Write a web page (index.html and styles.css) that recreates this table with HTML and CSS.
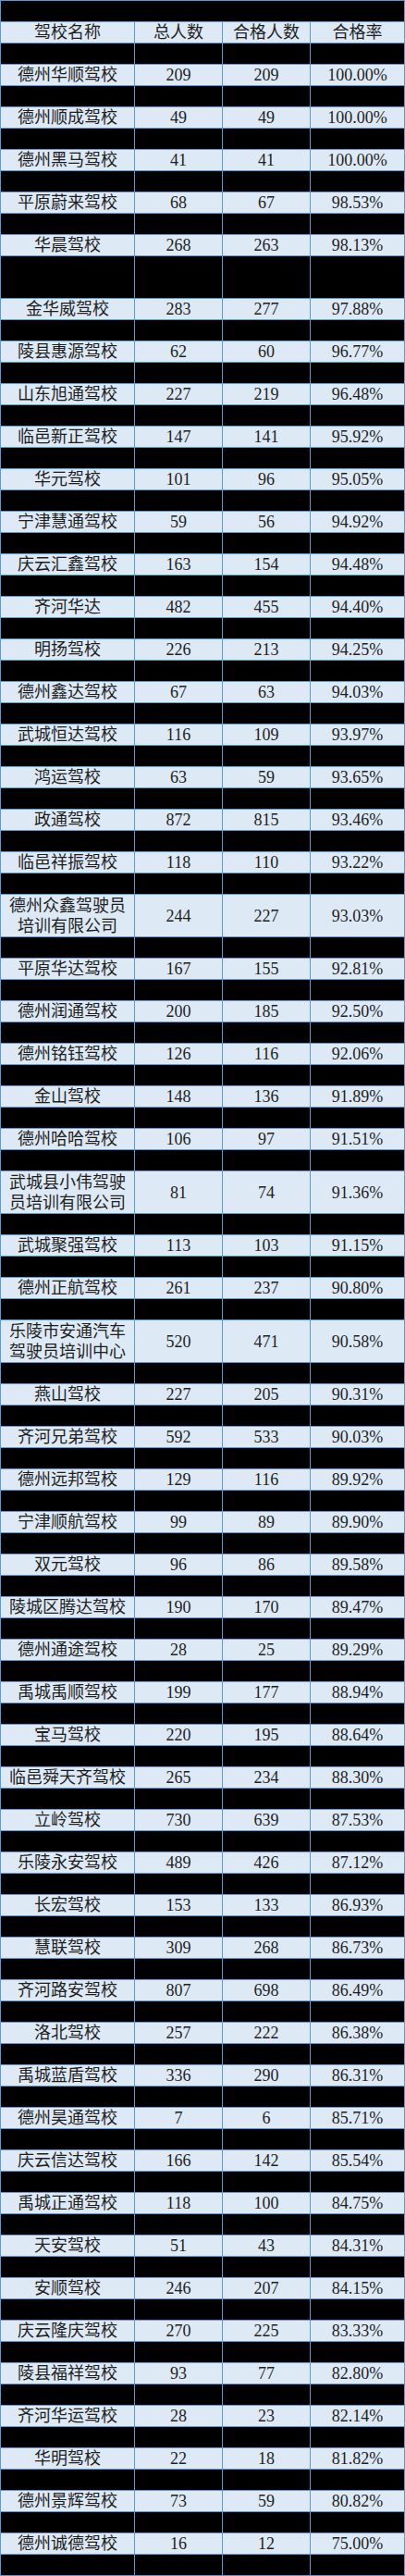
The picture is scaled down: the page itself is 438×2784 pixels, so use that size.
FILE: index.html
```html
<!DOCTYPE html>
<html lang="zh-CN">
<head>
<meta charset="utf-8">
<title>驾校合格率</title>
<link rel="stylesheet" href="styles.css">
</head>
<body>
<table class="grid">
<colgroup><col class="c-name"><col class="c-num"><col class="c-num"><col class="c-rate"></colgroup>
<tbody>
<tr class="title"><td colspan="4"></td></tr>
<tr class="row"><td>驾校名称</td><td>总人数</td><td>合格人数</td><td>合格率</td></tr>
<tr class="gap"><td></td><td></td><td></td><td></td></tr>
<tr class="row"><td>德州华顺驾校</td><td>209</td><td>209</td><td>100.00%</td></tr>
<tr class="gap"><td></td><td></td><td></td><td></td></tr>
<tr class="row"><td>德州顺成驾校</td><td>49</td><td>49</td><td>100.00%</td></tr>
<tr class="gap"><td></td><td></td><td></td><td></td></tr>
<tr class="row"><td>德州黑马驾校</td><td>41</td><td>41</td><td>100.00%</td></tr>
<tr class="gap"><td></td><td></td><td></td><td></td></tr>
<tr class="row"><td>平原蔚来驾校</td><td>68</td><td>67</td><td>98.53%</td></tr>
<tr class="gap"><td></td><td></td><td></td><td></td></tr>
<tr class="row"><td>华晨驾校</td><td>268</td><td>263</td><td>98.13%</td></tr>
<tr class="gap tall"><td></td><td></td><td></td><td></td></tr>
<tr class="row"><td>金华威驾校</td><td>283</td><td>277</td><td>97.88%</td></tr>
<tr class="gap"><td></td><td></td><td></td><td></td></tr>
<tr class="row"><td>陵县惠源驾校</td><td>62</td><td>60</td><td>96.77%</td></tr>
<tr class="gap"><td></td><td></td><td></td><td></td></tr>
<tr class="row"><td>山东旭通驾校</td><td>227</td><td>219</td><td>96.48%</td></tr>
<tr class="gap"><td></td><td></td><td></td><td></td></tr>
<tr class="row"><td>临邑新正驾校</td><td>147</td><td>141</td><td>95.92%</td></tr>
<tr class="gap"><td></td><td></td><td></td><td></td></tr>
<tr class="row"><td>华元驾校</td><td>101</td><td>96</td><td>95.05%</td></tr>
<tr class="gap"><td></td><td></td><td></td><td></td></tr>
<tr class="row"><td>宁津慧通驾校</td><td>59</td><td>56</td><td>94.92%</td></tr>
<tr class="gap"><td></td><td></td><td></td><td></td></tr>
<tr class="row"><td>庆云汇鑫驾校</td><td>163</td><td>154</td><td>94.48%</td></tr>
<tr class="gap"><td></td><td></td><td></td><td></td></tr>
<tr class="row"><td>齐河华达</td><td>482</td><td>455</td><td>94.40%</td></tr>
<tr class="gap"><td></td><td></td><td></td><td></td></tr>
<tr class="row"><td>明扬驾校</td><td>226</td><td>213</td><td>94.25%</td></tr>
<tr class="gap"><td></td><td></td><td></td><td></td></tr>
<tr class="row"><td>德州鑫达驾校</td><td>67</td><td>63</td><td>94.03%</td></tr>
<tr class="gap"><td></td><td></td><td></td><td></td></tr>
<tr class="row"><td>武城恒达驾校</td><td>116</td><td>109</td><td>93.97%</td></tr>
<tr class="gap"><td></td><td></td><td></td><td></td></tr>
<tr class="row"><td>鸿运驾校</td><td>63</td><td>59</td><td>93.65%</td></tr>
<tr class="gap"><td></td><td></td><td></td><td></td></tr>
<tr class="row"><td>政通驾校</td><td>872</td><td>815</td><td>93.46%</td></tr>
<tr class="gap"><td></td><td></td><td></td><td></td></tr>
<tr class="row"><td>临邑祥振驾校</td><td>118</td><td>110</td><td>93.22%</td></tr>
<tr class="gap"><td></td><td></td><td></td><td></td></tr>
<tr class="row two"><td>德州众鑫驾驶员<br>培训有限公司</td><td>244</td><td>227</td><td>93.03%</td></tr>
<tr class="gap"><td></td><td></td><td></td><td></td></tr>
<tr class="row"><td>平原华达驾校</td><td>167</td><td>155</td><td>92.81%</td></tr>
<tr class="gap"><td></td><td></td><td></td><td></td></tr>
<tr class="row"><td>德州润通驾校</td><td>200</td><td>185</td><td>92.50%</td></tr>
<tr class="gap"><td></td><td></td><td></td><td></td></tr>
<tr class="row"><td>德州铭钰驾校</td><td>126</td><td>116</td><td>92.06%</td></tr>
<tr class="gap"><td></td><td></td><td></td><td></td></tr>
<tr class="row"><td>金山驾校</td><td>148</td><td>136</td><td>91.89%</td></tr>
<tr class="gap"><td></td><td></td><td></td><td></td></tr>
<tr class="row"><td>德州哈哈驾校</td><td>106</td><td>97</td><td>91.51%</td></tr>
<tr class="gap"><td></td><td></td><td></td><td></td></tr>
<tr class="row two"><td>武城县小伟驾驶<br>员培训有限公司</td><td>81</td><td>74</td><td>91.36%</td></tr>
<tr class="gap"><td></td><td></td><td></td><td></td></tr>
<tr class="row"><td>武城聚强驾校</td><td>113</td><td>103</td><td>91.15%</td></tr>
<tr class="gap"><td></td><td></td><td></td><td></td></tr>
<tr class="row"><td>德州正航驾校</td><td>261</td><td>237</td><td>90.80%</td></tr>
<tr class="gap"><td></td><td></td><td></td><td></td></tr>
<tr class="row two"><td>乐陵市安通汽车<br>驾驶员培训中心</td><td>520</td><td>471</td><td>90.58%</td></tr>
<tr class="gap"><td></td><td></td><td></td><td></td></tr>
<tr class="row"><td>燕山驾校</td><td>227</td><td>205</td><td>90.31%</td></tr>
<tr class="gap"><td></td><td></td><td></td><td></td></tr>
<tr class="row"><td>齐河兄弟驾校</td><td>592</td><td>533</td><td>90.03%</td></tr>
<tr class="gap"><td></td><td></td><td></td><td></td></tr>
<tr class="row"><td>德州远邦驾校</td><td>129</td><td>116</td><td>89.92%</td></tr>
<tr class="gap"><td></td><td></td><td></td><td></td></tr>
<tr class="row"><td>宁津顺航驾校</td><td>99</td><td>89</td><td>89.90%</td></tr>
<tr class="gap"><td></td><td></td><td></td><td></td></tr>
<tr class="row"><td>双元驾校</td><td>96</td><td>86</td><td>89.58%</td></tr>
<tr class="gap"><td></td><td></td><td></td><td></td></tr>
<tr class="row"><td>陵城区腾达驾校</td><td>190</td><td>170</td><td>89.47%</td></tr>
<tr class="gap"><td></td><td></td><td></td><td></td></tr>
<tr class="row"><td>德州通途驾校</td><td>28</td><td>25</td><td>89.29%</td></tr>
<tr class="gap"><td></td><td></td><td></td><td></td></tr>
<tr class="row"><td>禹城禹顺驾校</td><td>199</td><td>177</td><td>88.94%</td></tr>
<tr class="gap"><td></td><td></td><td></td><td></td></tr>
<tr class="row"><td>宝马驾校</td><td>220</td><td>195</td><td>88.64%</td></tr>
<tr class="gap"><td></td><td></td><td></td><td></td></tr>
<tr class="row"><td>临邑舜天齐驾校</td><td>265</td><td>234</td><td>88.30%</td></tr>
<tr class="gap"><td></td><td></td><td></td><td></td></tr>
<tr class="row"><td>立岭驾校</td><td>730</td><td>639</td><td>87.53%</td></tr>
<tr class="gap"><td></td><td></td><td></td><td></td></tr>
<tr class="row"><td>乐陵永安驾校</td><td>489</td><td>426</td><td>87.12%</td></tr>
<tr class="gap"><td></td><td></td><td></td><td></td></tr>
<tr class="row"><td>长宏驾校</td><td>153</td><td>133</td><td>86.93%</td></tr>
<tr class="gap"><td></td><td></td><td></td><td></td></tr>
<tr class="row"><td>慧联驾校</td><td>309</td><td>268</td><td>86.73%</td></tr>
<tr class="gap"><td></td><td></td><td></td><td></td></tr>
<tr class="row"><td>齐河路安驾校</td><td>807</td><td>698</td><td>86.49%</td></tr>
<tr class="gap"><td></td><td></td><td></td><td></td></tr>
<tr class="row"><td>洛北驾校</td><td>257</td><td>222</td><td>86.38%</td></tr>
<tr class="gap"><td></td><td></td><td></td><td></td></tr>
<tr class="row"><td>禹城蓝盾驾校</td><td>336</td><td>290</td><td>86.31%</td></tr>
<tr class="gap"><td></td><td></td><td></td><td></td></tr>
<tr class="row"><td>德州昊通驾校</td><td>7</td><td>6</td><td>85.71%</td></tr>
<tr class="gap"><td></td><td></td><td></td><td></td></tr>
<tr class="row"><td>庆云信达驾校</td><td>166</td><td>142</td><td>85.54%</td></tr>
<tr class="gap"><td></td><td></td><td></td><td></td></tr>
<tr class="row"><td>禹城正通驾校</td><td>118</td><td>100</td><td>84.75%</td></tr>
<tr class="gap"><td></td><td></td><td></td><td></td></tr>
<tr class="row"><td>天安驾校</td><td>51</td><td>43</td><td>84.31%</td></tr>
<tr class="gap"><td></td><td></td><td></td><td></td></tr>
<tr class="row"><td>安顺驾校</td><td>246</td><td>207</td><td>84.15%</td></tr>
<tr class="gap"><td></td><td></td><td></td><td></td></tr>
<tr class="row"><td>庆云隆庆驾校</td><td>270</td><td>225</td><td>83.33%</td></tr>
<tr class="gap"><td></td><td></td><td></td><td></td></tr>
<tr class="row"><td>陵县福祥驾校</td><td>93</td><td>77</td><td>82.80%</td></tr>
<tr class="gap"><td></td><td></td><td></td><td></td></tr>
<tr class="row"><td>齐河华运驾校</td><td>28</td><td>23</td><td>82.14%</td></tr>
<tr class="gap"><td></td><td></td><td></td><td></td></tr>
<tr class="row"><td>华明驾校</td><td>22</td><td>18</td><td>81.82%</td></tr>
<tr class="gap"><td></td><td></td><td></td><td></td></tr>
<tr class="row"><td>德州景辉驾校</td><td>73</td><td>59</td><td>80.82%</td></tr>
<tr class="gap"><td></td><td></td><td></td><td></td></tr>
<tr class="row"><td>德州诚德驾校</td><td>16</td><td>12</td><td>75.00%</td></tr>
<tr class="gap"><td></td><td></td><td></td><td></td></tr>
</tbody>
</table>
</body>
</html>
```
FILE: styles.css
```css
html, body {
  margin: 0;
  padding: 0;
  background: #ffffff;
}

.grid {
  border-collapse: collapse;
  table-layout: fixed;
  width: 437px;
  font-family: "Liberation Serif", "Noto Sans CJK SC", serif;
  font-size: 18px;
  color: #1f1f1f;
}

.c-name { width: 145px; }
.c-num { width: 95px; }
.c-rate { width: 102px; }

.grid td {
  border: 1px solid #5b9bd5;
  height: 22px;
  padding: 0;
  line-height: 22px;
  text-align: center;
  vertical-align: middle;
  white-space: nowrap;
  overflow: hidden;
}

.title td,
.gap td {
  background: #000000;
}

.row td {
  background: #dde9f5;
}

.gap.tall td {
  height: 45px;
}

.row.two td {
  height: 45px;
}
```
